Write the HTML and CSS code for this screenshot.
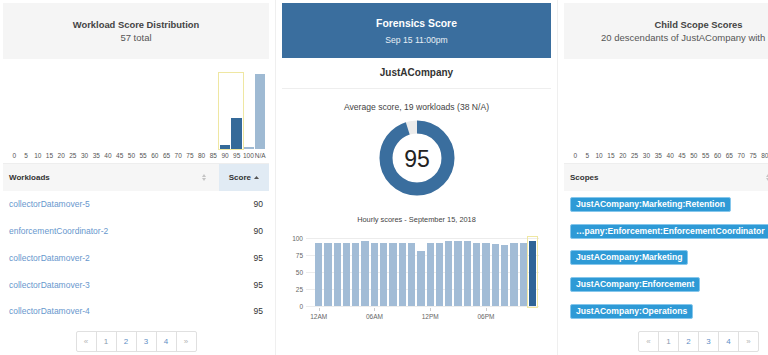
FILE: index.html
```html
<!DOCTYPE html>
<html lang="en">
<head>
    <meta charset="UTF-8">
    <title>Forensics Score</title>
    <link rel="stylesheet" href="styles.css">
</head>
<body>
    <div class="dashboard">

        <!-- Workload distribution -->
        <section class="panel">
            <header class="panel-head">
                <div class="panel-title">Workload Score Distribution</div>
                <div class="panel-sub">57 total</div>
            </header>
            <div class="histogram">
                <div class="hist-plot">
                    <div class="hist-bar" style="grid-column: 19; height: 5%"></div>
                    <div class="hist-bar" style="grid-column: 20; height: 40%"></div>
                    <div class="hist-bar light" style="grid-column: 21; height: 3%"></div>
                    <div class="hist-bar light" style="grid-column: 22; height: 96%"></div>
                    <div class="hist-select"></div>
                </div>
                <div class="hist-labels">
                    <span>0</span><span>5</span><span>10</span><span>15</span><span>20</span><span>25</span>
                    <span>30</span><span>35</span><span>40</span><span>45</span><span>50</span><span>55</span>
                    <span>60</span><span>65</span><span>70</span><span>75</span><span>80</span><span>85</span>
                    <span>90</span><span>95</span><span>100</span><span>N/A</span>
                </div>
            </div>
            <table class="data-table">
                <thead>
                    <tr>
                        <th><span class="th-inner">Workloads <svg class="sort-icon" width="4" height="7" viewBox="0 0 4 7"><path d="M0 3 L2 0 L4 3 Z M0 4 L2 7 L4 4 Z"/></svg></span></th>
                        <th class="score-col sorted">Score <svg class="caret" width="5" height="3" viewBox="0 0 5 3"><path d="M0 3 L2.5 0 L5 3 Z"/></svg></th>
                    </tr>
                </thead>
                <tbody>
                    <tr><td><a href="#">collectorDatamover-5</a></td><td class="num">90</td></tr>
                    <tr><td><a href="#">enforcementCoordinator-2</a></td><td class="num">90</td></tr>
                    <tr><td><a href="#">collectorDatamover-2</a></td><td class="num">95</td></tr>
                    <tr><td><a href="#">collectorDatamover-3</a></td><td class="num">95</td></tr>
                    <tr><td><a href="#">collectorDatamover-4</a></td><td class="num">95</td></tr>
                </tbody>
            </table>
            <nav class="pager">
                <a href="#" class="muted">&laquo;</a>
                <a href="#" class="current">1</a>
                <a href="#">2</a>
                <a href="#">3</a>
                <a href="#">4</a>
                <a href="#" class="muted">&raquo;</a>
            </nav>
        </section>

        <!-- Forensics score -->
        <section class="panel">
            <header class="panel-head active">
                <div class="panel-title">Forensics Score</div>
                <div class="panel-sub">Sep 15 11:00pm</div>
            </header>
            <div class="scope-name">JustACompany</div>
            <div class="avg-label">Average score, 19 workloads (38 N/A)</div>
            <svg class="donut" width="76" height="76" viewBox="0 0 76 76">
                <circle cx="38" cy="38" r="31" fill="none" stroke="#ececec" stroke-width="13"/>
                <circle cx="38" cy="38" r="31" fill="none" stroke="#3a6e9e" stroke-width="13"
                        stroke-dasharray="185.04 194.78" transform="rotate(-90 38 38)"/>
                <text x="38" y="39" text-anchor="middle" dominant-baseline="central">95</text>
            </svg>
            <div class="hourly-title">Hourly scores - September 15, 2018</div>
            <div class="hourly">
                <div class="y-axis">
                    <span>100</span><span>75</span><span>50</span><span>25</span><span>0</span>
                </div>
                <div class="hourly-main">
                    <div class="hourly-plot">
                        <div class="hour-bar" style="height: 92%"></div>
                        <div class="hour-bar" style="height: 93%"></div>
                        <div class="hour-bar" style="height: 93%"></div>
                        <div class="hour-bar" style="height: 93%"></div>
                        <div class="hour-bar" style="height: 93%"></div>
                        <div class="hour-bar" style="height: 95%"></div>
                        <div class="hour-bar" style="height: 92%"></div>
                        <div class="hour-bar" style="height: 93%"></div>
                        <div class="hour-bar" style="height: 93%"></div>
                        <div class="hour-bar" style="height: 92%"></div>
                        <div class="hour-bar" style="height: 93%"></div>
                        <div class="hour-bar" style="height: 81%"></div>
                        <div class="hour-bar" style="height: 92%"></div>
                        <div class="hour-bar" style="height: 93%"></div>
                        <div class="hour-bar" style="height: 95%"></div>
                        <div class="hour-bar" style="height: 95%"></div>
                        <div class="hour-bar" style="height: 95%"></div>
                        <div class="hour-bar" style="height: 93%"></div>
                        <div class="hour-bar" style="height: 93%"></div>
                        <div class="hour-bar" style="height: 91%"></div>
                        <div class="hour-bar" style="height: 89%"></div>
                        <div class="hour-bar" style="height: 92%"></div>
                        <div class="hour-bar" style="height: 93%"></div>
                        <div class="hour-bar current" style="height: 95%"></div>
                        <div class="hour-select"></div>
                    </div>
                    <div class="hour-labels">
                        <span style="grid-column: 1">12AM</span>
                        <span style="grid-column: 7">06AM</span>
                        <span style="grid-column: 13">12PM</span>
                        <span style="grid-column: 19">06PM</span>
                    </div>
                </div>
            </div>
        </section>

        <!-- Child scopes -->
        <section class="panel">
            <header class="panel-head">
                <div class="panel-title">Child Scope Scores</div>
                <div class="panel-sub">20 descendants of JustACompany with scores</div>
            </header>
            <div class="histogram">
                <div class="hist-plot"></div>
                <div class="hist-labels">
                    <span>0</span><span>5</span><span>10</span><span>15</span><span>20</span><span>25</span>
                    <span>30</span><span>35</span><span>40</span><span>45</span><span>50</span><span>55</span>
                    <span>60</span><span>65</span><span>70</span><span>75</span><span>80</span><span>85</span>
                    <span>90</span><span>95</span><span>100</span><span>N/A</span>
                </div>
            </div>
            <table class="data-table">
                <thead>
                    <tr>
                        <th class="plain"><span class="th-inner">Scopes <svg class="sort-icon" width="4" height="7" viewBox="0 0 4 7"><path d="M0 3 L2 0 L4 3 Z M0 4 L2 7 L4 4 Z"/></svg></span></th>
                        <th class="score-col plain">Score</th>
                    </tr>
                </thead>
                <tbody>
                    <tr><td><span class="pill">JustACompany:Marketing:Retention</span></td><td class="num">88</td></tr>
                    <tr><td><span class="pill">…pany:Enforcement:EnforcementCoordinator</span></td><td class="num">90</td></tr>
                    <tr><td><span class="pill">JustACompany:Marketing</span></td><td class="num">92</td></tr>
                    <tr><td><span class="pill">JustACompany:Enforcement</span></td><td class="num">93</td></tr>
                    <tr><td><span class="pill">JustACompany:Operations</span></td><td class="num">94</td></tr>
                </tbody>
            </table>
            <nav class="pager">
                <a href="#" class="muted">&laquo;</a>
                <a href="#" class="current">1</a>
                <a href="#">2</a>
                <a href="#">3</a>
                <a href="#">4</a>
                <a href="#" class="muted">&raquo;</a>
            </nav>
        </section>

    </div>
</body>
</html>
```

FILE: styles.css
```css
html, body {
    margin: 0;
    overflow: hidden;
}

body {
    font-family: "Liberation Sans", Arial, sans-serif;
    background-color: #fff;
    color: #333;
}

.dashboard {
    display: flex;
    height: 355px;
}

.panel {
    flex: 0 0 282px;
    box-sizing: border-box;
    padding: 3px 6px 0 6px;
    border-right: 1px solid #efefef;
}

.panel:first-child {
    flex-basis: 276px;
    padding-left: 3px;
}

/* panel headers */
.panel-head {
    height: 56px;
    background-color: #f5f5f5;
    display: flex;
    flex-direction: column;
    justify-content: center;
    align-items: center;
    white-space: nowrap;
}

.panel-title {
    font-size: 9.4px;
    font-weight: bold;
    line-height: 13px;
    color: #444;
}

.panel-sub {
    font-size: 9.5px;
    line-height: 13px;
    color: #555;
}

.panel-head.active {
    height: 55px;
    box-sizing: border-box;
    padding-top: 2px;
    background-color: #3a6e9e;
}

.panel-head.active .panel-title {
    font-size: 10.4px;
    line-height: 14px;
    color: #fff;
}

.panel-head.active .panel-sub {
    font-size: 8.6px;
    line-height: 12px;
    margin-top: 3px;
    color: #e8eef5;
}

/* histogram */
.histogram {
    padding: 13px 3px 2px 5.5px;
    border-bottom: 1px solid #eee;
}

.hist-plot {
    display: grid;
    grid-template-columns: repeat(22, 1fr);
    grid-template-rows: 78px;
}

.hist-bar {
    grid-row: 1;
    align-self: end;
    margin: 0 0.6px 1px;
    background-color: #356a99;
}

.hist-bar.light {
    background-color: #9fbad3;
}

.hist-select {
    grid-column: 19 / span 2;
    grid-row: 1;
    margin: 0 -1px;
    border: 1.5px solid #efe7a2;
}

.hist-labels {
    display: grid;
    grid-template-columns: repeat(22, 1fr);
    font-size: 6.5px;
    line-height: 11px;
    color: #555;
    text-align: center;
    white-space: nowrap;
}

/* tables */
.data-table {
    width: 100%;
    border-collapse: collapse;
    table-layout: fixed;
    font-size: 8.5px;
}

.data-table th {
    height: 27px;
    padding: 0 6px;
    background-color: #f6f6f6;
    font-size: 8px;
    font-weight: bold;
    color: #333;
    text-align: left;
}

.th-inner {
    display: flex;
    justify-content: space-between;
    align-items: center;
    padding-right: 7px;
}

.sort-icon {
    fill: #c4c4c4;
}

.data-table th.score-col {
    width: 50px;
    text-align: center;
    padding: 0;
}

.data-table th.sorted {
    background-color: #e1ebf4;
}

.caret {
    fill: #555;
    margin-left: 1px;
    vertical-align: 1px;
}

.data-table td {
    height: 26.75px;
    padding: 0 6px;
    white-space: nowrap;
}

.data-table td.num {
    text-align: right;
    color: #333;
}

.data-table a {
    color: #6797cd;
    text-decoration: none;
}

.pill {
    display: inline-block;
    padding: 1px 5px;
    line-height: 11px;
    font-size: 8.6px;
    font-weight: bold;
    color: #fff;
    background-color: #2e9ad6;
    border: 1px solid #86c7ec;
    border-radius: 2px;
}

/* pagination */
.pager {
    display: flex;
    width: fit-content;
    margin: 6px auto 0;
}

.pager a {
    width: 21px;
    height: 21px;
    box-sizing: border-box;
    margin-left: -1px;
    border: 1px solid #e0e0e0;
    display: flex;
    justify-content: center;
    align-items: center;
    font-size: 8px;
    color: #5f8fc6;
    text-decoration: none;
}

.pager a:first-child {
    margin-left: 0;
    border-radius: 2px 0 0 2px;
}

.pager a:last-child {
    border-radius: 0 2px 2px 0;
}

.pager a.current {
    color: #8a9cb0;
}

.pager a.muted {
    color: #b5b5b5;
}

/* forensics score */
.scope-name {
    height: 30px;
    line-height: 30px;
    border-bottom: 1px solid #eee;
    text-align: center;
    font-size: 10px;
    font-weight: bold;
    color: #333;
}

.avg-label {
    margin-top: 12px;
    line-height: 12px;
    font-size: 8.6px;
    color: #444;
    text-align: center;
}

.donut {
    display: block;
    margin: 7px auto 0;
}

.donut text {
    font-family: "Liberation Sans", Arial, sans-serif;
    font-size: 23px;
    fill: #222;
}

.hourly-title {
    margin-top: 19px;
    line-height: 10px;
    font-size: 7.4px;
    color: #444;
    text-align: center;
}

.hourly {
    display: flex;
    margin-top: 13px;
}

.y-axis {
    width: 24px;
    margin: -8.5px 0 0;
    padding-right: 3px;
    box-sizing: border-box;
    display: flex;
    flex-direction: column;
    align-items: flex-end;
    font-size: 6.5px;
    line-height: 17px;
    color: #666;
}

.hourly-main {
    flex: 1;
}

.hourly-plot {
    height: 69px;
    width: 233px;
    box-sizing: border-box;
    padding-left: 8px;
    display: grid;
    grid-template-columns: repeat(24, 9.3px);
    grid-template-rows: 68px;
    background-image: repeating-linear-gradient(to bottom, #ececec 0, #ececec 1px, transparent 1px, transparent 17px);
}

.hour-bar {
    grid-row: 1;
    align-self: end;
    margin: 0 1px;
    background-color: #a2bcd6;
}

.hour-bar.current {
    grid-column: 24;
    background-color: #2f6497;
}

.hour-select {
    grid-column: 24;
    grid-row: 1;
    margin: -2px -1px -2px -1px;
    border: 1.5px solid #efe7a2;
}

.hour-labels {
    padding-left: 8px;
    display: grid;
    grid-template-columns: repeat(24, 9.3px);
    font-size: 6.5px;
    color: #666;
}

.hour-labels span {
    grid-row: 1;
    justify-self: center;
    white-space: nowrap;
    padding-top: 6px;
    line-height: 8px;
    position: relative;
}

.hour-labels span::before {
    content: "";
    position: absolute;
    top: 1px;
    left: 50%;
    width: 1px;
    height: 3px;
    background-color: #ccc;
}
```
